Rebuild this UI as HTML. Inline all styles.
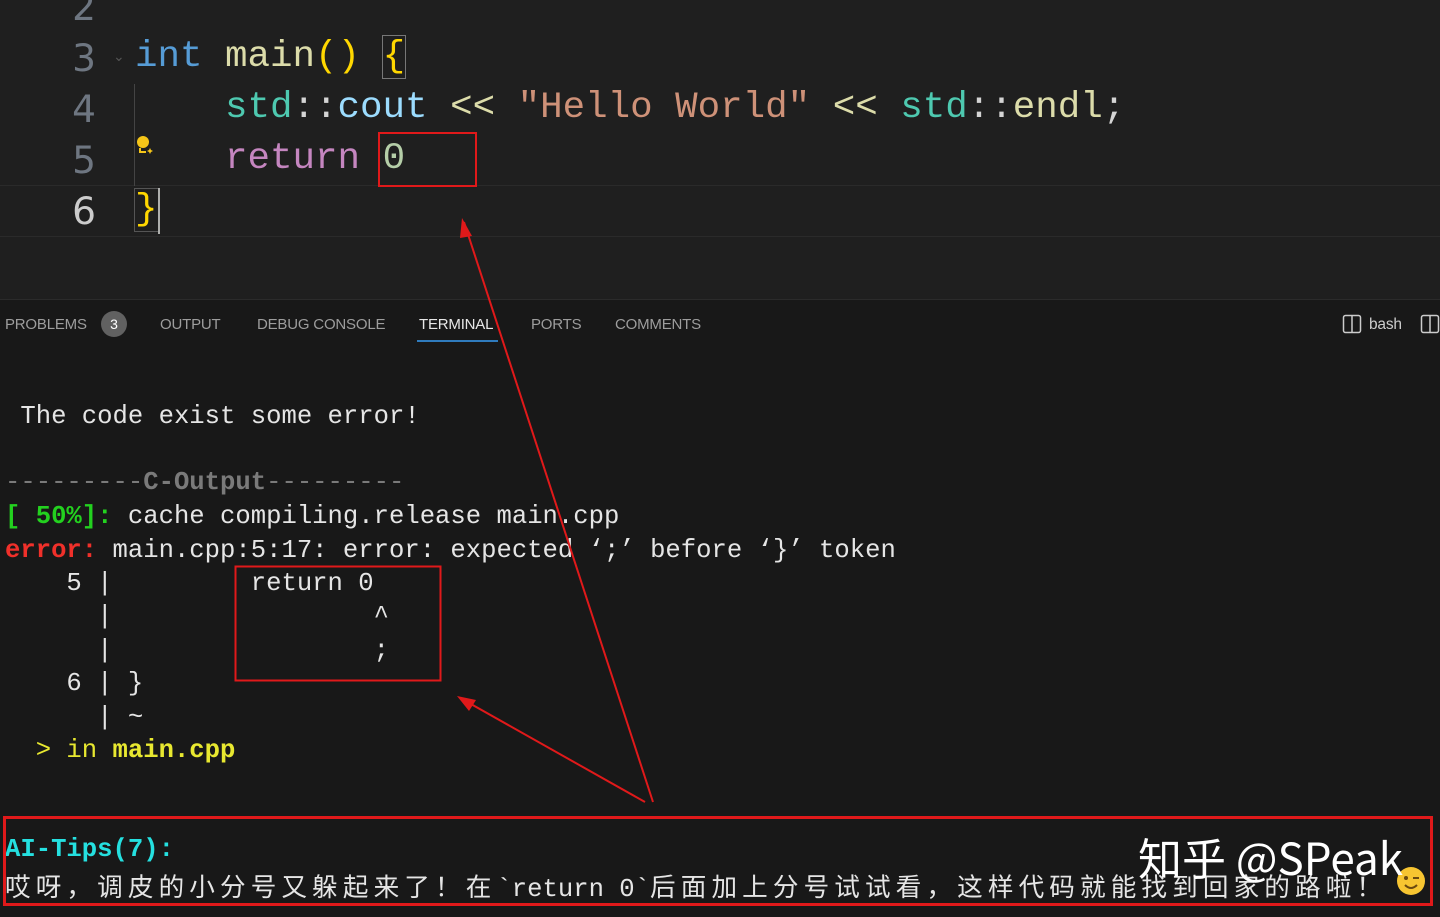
<!DOCTYPE html>
<html><head><meta charset="utf-8"><style>
html,body{margin:0;padding:0;width:1440px;height:916px;overflow:hidden;background:#1f1f1f}
.ed{position:absolute;left:0;top:0;width:1440px;height:299px;background:#1f1f1f}
.cl{position:absolute;left:135px;height:51px;line-height:51px;font:37.5px "Liberation Mono","DejaVu Sans Mono",monospace;white-space:pre;color:#d4d4d4}
.ln{position:absolute;width:96px;text-align:right;left:0;height:51px;line-height:51px;font:37.5px "DejaVu Sans","Liberation Sans",sans-serif;color:#6e7681}
.panel{position:absolute;left:0;top:299px;width:1440px;height:617px;background:#181818;border-top:1px solid #2b2b2b}
.tab{position:absolute;top:316px;font:15px "Liberation Sans",sans-serif;color:#9d9d9d;letter-spacing:-0.2px}
.t{position:absolute;left:5px;height:34px;line-height:34px;font:25.6px "Liberation Mono","DejaVu Sans Mono","Noto Sans CJK SC",monospace;white-space:pre;color:#e5e5e5}
.cj{letter-spacing:5.12px;font-family:"Noto Sans CJK SC","WenQuanYi Zen Hei",sans-serif}
</style></head><body>
<div class="ed">
  <div style="position:absolute;left:0;right:0;top:185px;height:50px;border-top:1px solid #2a2a2a;border-bottom:1px solid #2a2a2a"></div>
  <div style="position:absolute;left:134px;top:84px;width:1px;height:102px;background:#444"></div>
  <div class="ln" style="top:-15px">2</div>
  <div class="ln" style="top:36px">3</div>
  <div class="ln" style="top:87px">4</div>
  <div class="ln" style="top:138px">5</div>
  <div class="ln" style="top:189px;color:#cccccc">6</div>
  <div style="position:absolute;left:113px;top:48px;color:#555;font:14px sans-serif">⌄</div>
  <div class="cl" style="top:36px"><span style="color:#569cd6">int</span> <span style="color:#dcdcaa">main</span><span style="color:#ffd700">()</span> <span style="color:#ffd700;outline:1px solid #777;">{</span></div>
  <div class="cl" style="top:87px">    <span style="color:#4ec9b0">std</span>::<span style="color:#9cdcfe">cout</span> <span style="color:#dcdcaa">&lt;&lt;</span> <span style="color:#ce9178">"Hello World"</span> <span style="color:#dcdcaa">&lt;&lt;</span> <span style="color:#4ec9b0">std</span>::<span style="color:#dcdcaa">endl</span>;</div>
  <div class="cl" style="top:138px">    <span style="color:#c586c0">return</span> <span style="color:#b5cea8">0</span></div>
  <div class="cl" style="top:189px"><span style="color:#ffd700;outline:1px solid #555">}</span></div>
  <div style="position:absolute;left:158px;top:188px;width:2px;height:46px;background:#aeafad"></div>
  <svg style="position:absolute;left:135px;top:134px" width="24" height="24"><circle cx="8" cy="8" r="6" fill="#f5c518"/><path d="M5 14 L5 18 L11 18" stroke="#f5c518" stroke-width="2" fill="none"/><path d="M15 14l1 2 2 1-2 1-1 2-1-2-2-1 2-1z" fill="#f5c518"/></svg>
</div>
<div class="panel"></div>
<div class="tab" style="left:5px">PROBLEMS</div>
<div style="position:absolute;left:101px;top:311px;width:26px;height:26px;border-radius:13px;background:#616161;color:#fff;font:14px 'Liberation Sans',sans-serif;text-align:center;line-height:26px">3</div>
<div class="tab" style="left:160px">OUTPUT</div>
<div class="tab" style="left:257px">DEBUG CONSOLE</div>
<div class="tab" style="left:419px;color:#e7e7e7">TERMINAL</div>
<div style="position:absolute;left:417px;top:340px;width:81px;height:2px;background:#2f7bbd"></div>
<div class="tab" style="left:531px">PORTS</div>
<div class="tab" style="left:615px">COMMENTS</div>
<svg style="position:absolute;left:1342px;top:314px" width="20" height="20"><rect x="1.5" y="1.5" width="17" height="17" rx="2" fill="none" stroke="#ccc" stroke-width="1.5"/><line x1="10" y1="2" x2="10" y2="18" stroke="#ccc" stroke-width="1.5"/></svg>
<div class="tab" style="left:1369px;color:#ccc;font-size:15.5px">bash</div>
<svg style="position:absolute;left:1420px;top:314px" width="20" height="20"><rect x="1.5" y="1.5" width="17" height="17" rx="2" fill="none" stroke="#ccc" stroke-width="1.5"/><line x1="10" y1="2" x2="10" y2="18" stroke="#ccc" stroke-width="1.5"/></svg>

<div class="t" style="top:402px"> The code exist some error!</div>
<div class="t" style="top:468px;color:#7a7a7a">---------<b>C-Output</b>---------</div>
<div class="t" style="top:502px"><b style="color:#23d11f">[ 50%]:</b> cache compiling.release main.cpp</div>
<div class="t" style="top:536px"><b style="color:#f0302a">error:</b> main.cpp:5:17: error: expected ‘;’ before ‘}’ token</div>
<div class="t" style="top:569px">    5 |         return 0</div>
<div class="t" style="top:602px">      |                 ^</div>
<div class="t" style="top:636px">      |                 ;</div>
<div class="t" style="top:669px">    6 | }</div>
<div class="t" style="top:703px">      | ~</div>
<div class="t" style="top:736px;color:#e8e830">  &gt; in <b>main.cpp</b></div>
<div class="t" style="top:835px;color:#25e0e0"><b>AI-Tips(7):</b></div>
<div class="t" style="top:867px"><span class="cj">哎呀，调皮的小分号又躲起来了！在</span>`return 0`<span class="cj">后面加上分号试试看，这样代码就能找到回家的路啦！</span></div>
<svg style="position:absolute;left:1397px;top:867px" width="28" height="28"><circle cx="14" cy="14" r="14" fill="#f7c531"/><circle cx="9" cy="11" r="2" fill="#6b4a10"/><path d="M16 11 h6" stroke="#6b4a10" stroke-width="2"/><path d="M8 18 q6 6 12 0" stroke="#6b4a10" stroke-width="2" fill="none"/></svg>
<div style="position:absolute;left:1138px;top:826px;font:44px 'Noto Sans CJK SC','Liberation Sans',sans-serif;color:#fff;white-space:pre;line-height:60px">知乎 @SPeak</div>

<svg style="position:absolute;left:0;top:0" width="1440" height="916">
<rect x="379" y="133" width="97" height="53" fill="none" stroke="#e0191a" stroke-width="2"/>
<rect x="235.5" y="566.5" width="205" height="114" fill="none" stroke="#e0191a" stroke-width="2"/>
<rect x="4.5" y="817.5" width="1427" height="87" fill="none" stroke="#e0191a" stroke-width="3"/>
<line x1="653" y1="802" x2="464" y2="222" stroke="#e0191a" stroke-width="2"/>
<polygon points="462,218 472,236 460,238" fill="#e0191a"/>
<line x1="645" y1="802" x2="462" y2="699" stroke="#e0191a" stroke-width="2"/>
<polygon points="457,696 476,700 469,711" fill="#e0191a"/>
</svg>
</body></html>
